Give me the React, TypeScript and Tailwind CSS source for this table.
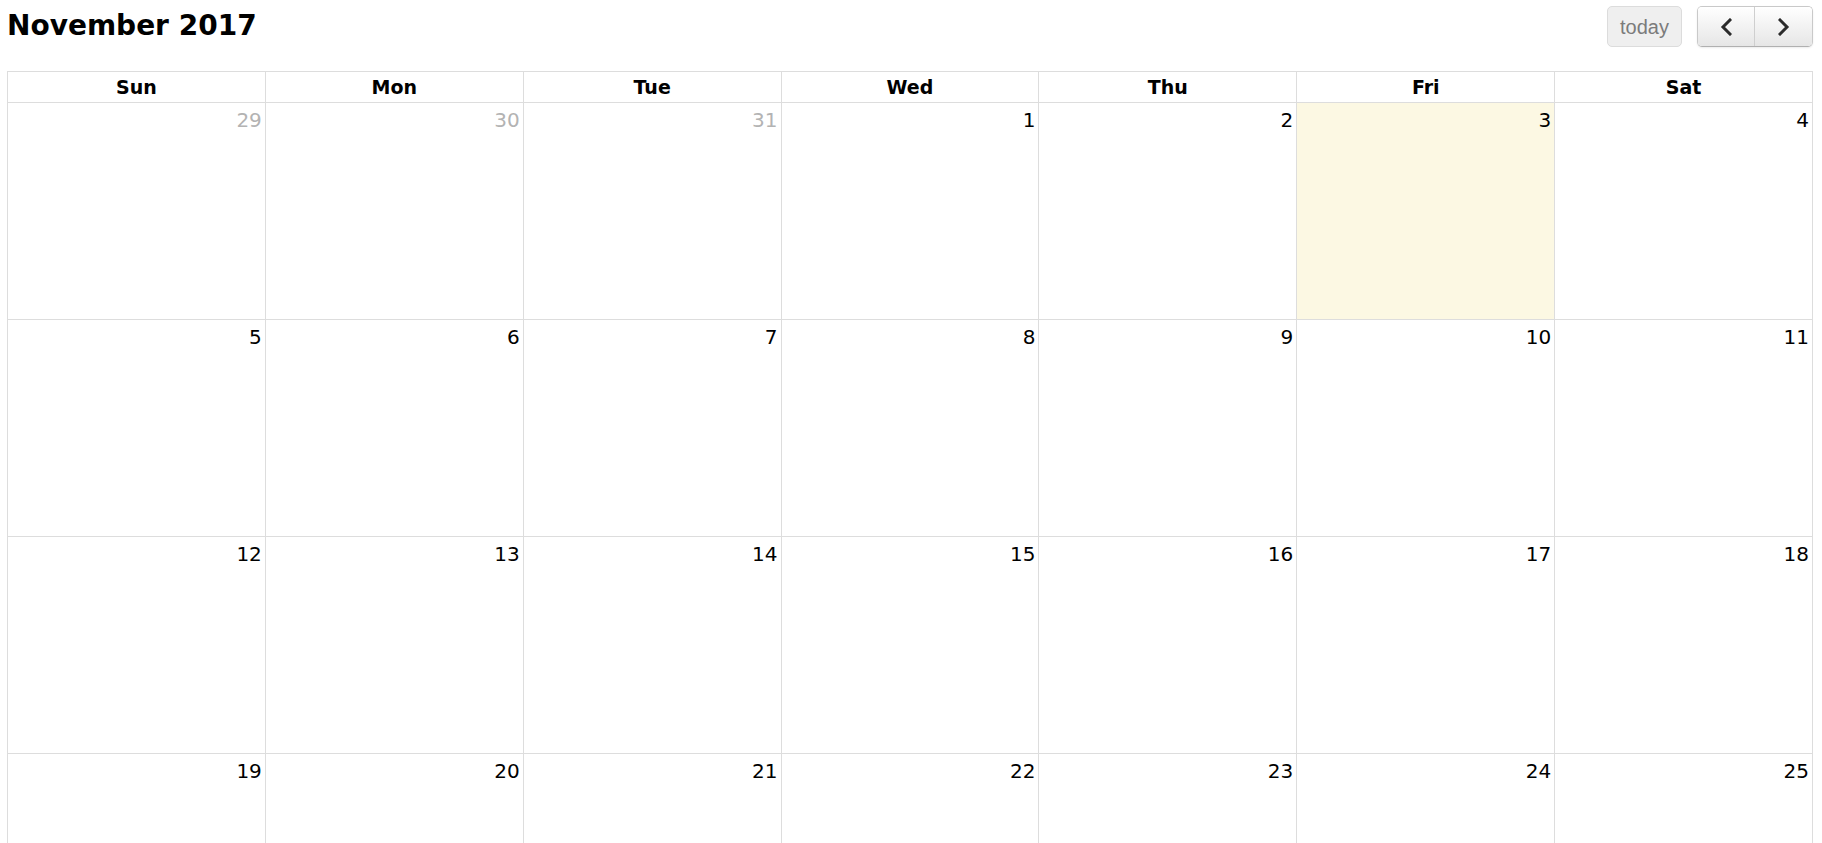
import React from "react"

const days = ["Sun", "Mon", "Tue", "Wed", "Thu", "Fri", "Sat"]

interface Cell {
  day: number
  other: boolean
  today: boolean
}

function buildWeeks(): Cell[][] {
  const cells: Cell[] = []
  ;[29, 30, 31].forEach((d) => cells.push({ day: d, other: true, today: false }))
  for (let d = 1; d <= 30; d++) cells.push({ day: d, other: false, today: d === 3 })
  ;[1, 2].forEach((d) => cells.push({ day: d, other: true, today: false }))
  const weeks: Cell[][] = []
  for (let i = 0; i < cells.length; i += 7) weeks.push(cells.slice(i, i + 7))
  return weeks
}

function Chevron({ dir }: { dir: "left" | "right" }) {
  return (
    <svg width="12" height="18" viewBox="0 0 12 18" fill="none">
      <polyline
        points={dir === "left" ? "10,2 3,9 10,16" : "2,2 9,9 2,16"}
        stroke="#2b2b2b"
        strokeWidth="3"
        strokeLinecap="square"
        strokeLinejoin="miter"
      />
    </svg>
  )
}

export default function App() {
  const weeks = buildWeeks()

  return (
    <div className="bg-white min-h-screen" style={{ fontFamily: '"DejaVu Sans", Verdana, sans-serif' }}>
      <div className="w-[1806px] ml-[7px] pt-[6px]">
        {/* toolbar */}
        <div className="flex justify-between items-start h-[41px]">
          <h2 className="text-[28px] leading-[30px] font-bold text-black mt-[5px]">November 2017</h2>
          <div className="flex items-start">
            <button
              disabled
              className="h-[41px] w-[75px] rounded-[5px] border border-[#dcdcdc] bg-[#efefef] text-[#7b7b7b] text-[20px]"
              style={{ fontFamily: '"Liberation Sans", Arial, sans-serif' }}
            >
              today
            </button>
            <div className="flex ml-[15px] h-[41px] rounded-[5px] border border-[#c9c9c9] border-b-[#b0b0b0] shadow-[inset_0_1px_0_rgba(255,255,255,0.3),0_1px_2px_rgba(0,0,0,0.08)] overflow-hidden">
              <button className="w-[57px] flex items-center justify-center bg-gradient-to-b from-white to-[#e6e6e6] border-r border-[#cfcfcf]">
                <Chevron dir="left" />
              </button>
              <button className="w-[57px] flex items-center justify-center bg-gradient-to-b from-white to-[#e6e6e6]">
                <Chevron dir="right" />
              </button>
            </div>
          </div>
        </div>

        {/* calendar */}
        <div className="mt-[24px] border-l border-t border-[#dddddd]">
          <div className="grid grid-cols-7">
            {days.map((d) => (
              <div
                key={d}
                className="h-[31px] border-r border-b border-[#dddddd] flex items-center justify-center text-[19px] font-bold text-black"
              >
                {d}
              </div>
            ))}
          </div>
          {weeks.map((week, wi) => (
            <div key={wi} className="grid grid-cols-7">
              {week.map((c, ci) => (
                <div
                  key={ci}
                  className={`h-[217px] border-r border-b border-[#dddddd] pt-[5px] pr-[3px] text-right text-[20px] leading-[24px] ${
                    c.today ? "bg-[#fcf8e3]" : "bg-white"
                  } ${c.other ? "text-[#b3b3b3]" : "text-black"}`}
                >
                  {c.day}
                </div>
              ))}
            </div>
          ))}
        </div>
      </div>
    </div>
  )
}
